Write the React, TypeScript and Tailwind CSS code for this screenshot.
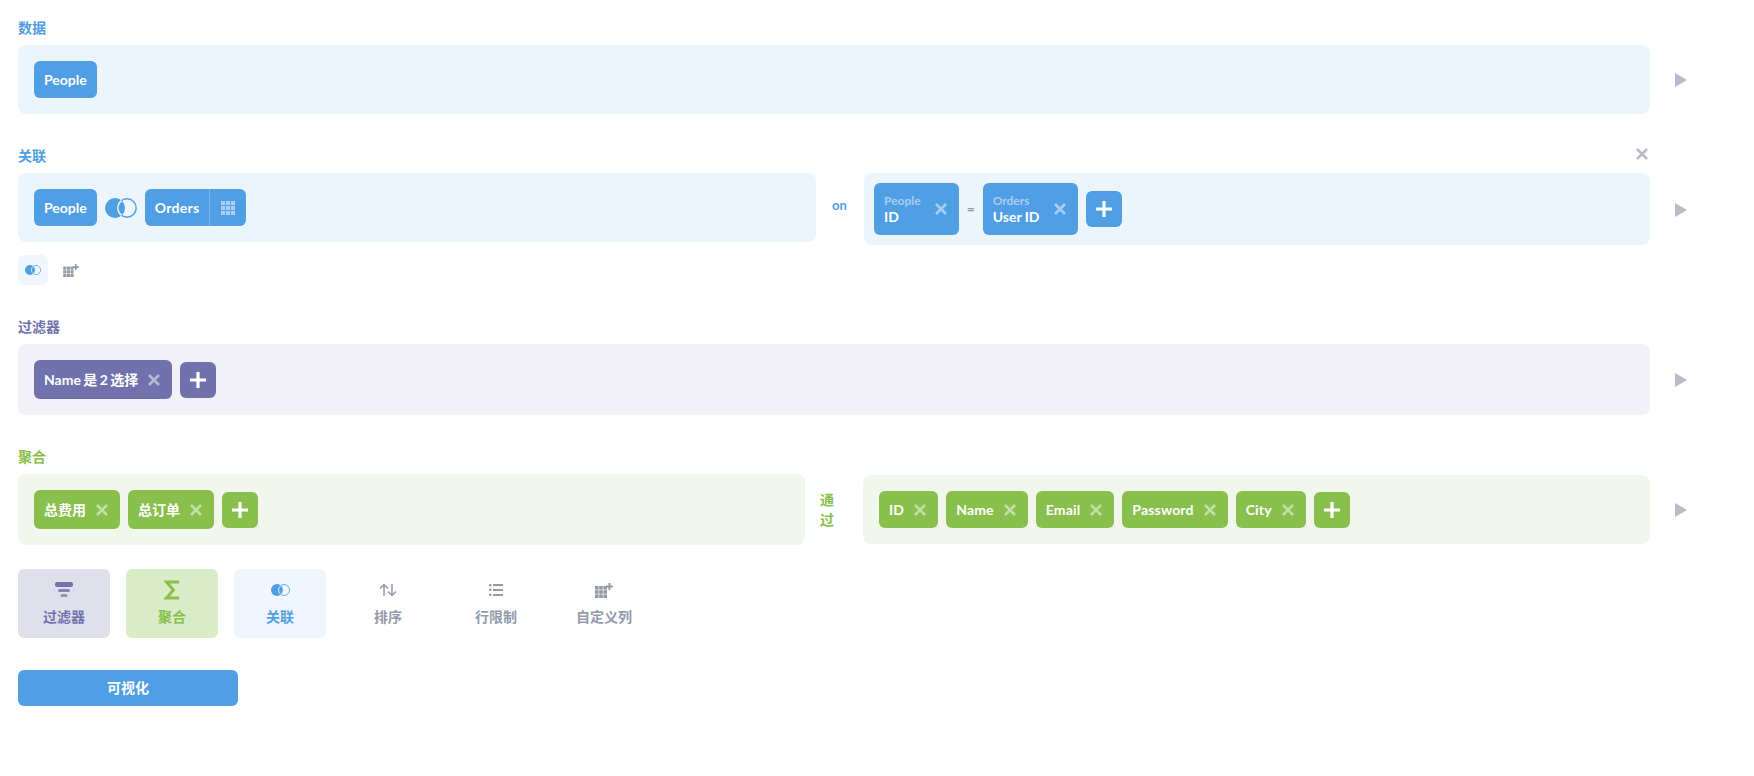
import type { ReactNode } from "react";

const BLUE = "#509EE3";
const PURPLE = "#7172AD";
const GREEN = "#88BF4D";

function CloseIcon({ className = "" }: { className?: string }) {
  return (
    <svg viewBox="0 0 12 12" className={`h-3 w-3 shrink-0 ${className}`} fill="none" stroke="currentColor" strokeWidth="2.6">
      <path d="M1 1l10 10M11 1L1 11" />
    </svg>
  );
}

function PlusIcon() {
  return (
    <svg viewBox="0 0 18 18" className="h-[18px] w-[18px]" fill="none" stroke="currentColor" strokeWidth="3.2">
      <path d="M9 1v16M1 9h16" />
    </svg>
  );
}

function JoinIcon({ className = "", color = BLUE, id }: { className?: string; color?: string; id: string }) {
  return (
    <svg viewBox="0 0 32 20" className={className}>
      <defs>
        <clipPath id={id}>
          <circle cx="10" cy="10" r="10" />
        </clipPath>
      </defs>
      <circle cx="10" cy="10" r="10" fill={color} />
      <circle cx="22" cy="10" r="9.2" fill="none" stroke={color} strokeWidth="1.4" />
      <circle cx="22" cy="10" r="9.2" fill="none" stroke="#fff" strokeWidth="1.4" clipPath={`url(#${id})`} />
    </svg>
  );
}

function GridIcon({ className = "" }: { className?: string }) {
  const cells = [0, 5, 10];
  return (
    <svg viewBox="0 0 14 14" className={className} fill="currentColor">
      {cells.map((y) => cells.map((x) => <rect key={`${x}-${y}`} x={x} y={y} width="4.2" height="4.2" />))}
    </svg>
  );
}

function GridPlusIcon({ className = "" }: { className?: string }) {
  const cells = [0, 4.2, 8.4];
  return (
    <svg viewBox="0 0 18 15" className={className} fill="currentColor">
      {cells.map((y) => cells.map((x) => <rect key={`${x}-${y}`} x={x} y={y + 3} width="3.6" height="3.6" />))}
      <path d="M13.5 0h2v2.5H18v2h-2.5V7h-2V4.500H11v-2h2.500z" />
    </svg>
  );
}

function Play({ className = "" }: { className?: string }) {
  return (
    <svg viewBox="0 0 12 14" className={`ml-[25px] h-[14px] w-3 shrink-0 self-center text-[#B8BBC8] ${className}`} fill="currentColor">
      <path d="M0 0l12 7-12 7z" />
    </svg>
  );
}

function Pill({ color, close = true, children, className = "" }: { color: string; close?: boolean; children: ReactNode; className?: string }) {
  return (
    <div
      className={`flex items-center rounded-[6px] pl-[10px] text-sm font-bold text-white ${close ? "gap-[10px] pr-3" : "pr-[10px]"} ${className}`}
      style={{ backgroundColor: color }}
    >
      <span>{children}</span>
      {close ? <CloseIcon className="text-white/50" /> : null}
    </div>
  );
}

function PlusButton({ color }: { color: string }) {
  return (
    <div className="flex h-9 w-9 shrink-0 items-center justify-center rounded-[6px] text-white" style={{ backgroundColor: color }}>
      <PlusIcon />
    </div>
  );
}

function FieldPill({ table, field }: { table: string; field: string }) {
  return (
    <div className="flex h-[52px] items-center gap-[14px] rounded-[6px] bg-[#509EE3] pl-[10px] pr-3 font-bold text-white">
      <div>
        <div className="text-xs leading-4 text-white/50">{table}</div>
        <div className="text-sm leading-4">{field}</div>
      </div>
      <CloseIcon className="text-white/50" />
    </div>
  );
}

function Label({ color, children }: { color: string; children: ReactNode }) {
  return (
    <div className="mb-2 h-[18px] text-sm font-bold leading-[18px]" style={{ color }}>
      {children}
    </div>
  );
}

function Tile({ label, icon, className }: { label: string; icon: ReactNode; className: string }) {
  return (
    <div className={`flex h-[69px] w-[92px] flex-col items-center rounded-[6px] pt-[11px] ${className}`}>
      <div className="flex h-5 items-center justify-center">{icon}</div>
      <div className="mt-[7px] text-sm font-bold leading-5">{label}</div>
    </div>
  );
}

export default function App() {
  return (
    <div className="min-h-[776px] bg-white pl-[18px] pt-[19px] font-['Lato','Noto_Sans_CJK_SC',sans-serif]">
      <section>
        <Label color={BLUE}>数据</Label>
        <div className="flex">
          <div className="w-[1632px] rounded-lg bg-[#ECF4FC] p-4">
            <Pill color={BLUE} close={false} className="h-[37px] w-fit">People</Pill>
          </div>
          <Play />
        </div>
      </section>

      <section className="mt-[33px]">
        <div className="flex w-[1632px] items-start justify-between">
          <Label color={BLUE}>关联</Label>
          <CloseIcon className="mr-[2px] mt-[1px] text-[#B8BBC8]" />
        </div>
        <div className="flex">
          <div className="flex w-[1632px] items-start">
            <div className="flex h-[69px] w-[798px] items-center gap-2 rounded-lg bg-[#ECF4FC] px-4">
              <Pill color={BLUE} close={false} className="h-[37px]">People</Pill>
              <JoinIcon id="join-main" className="h-5 w-8" />
              <div className="flex h-[37px] items-center rounded-[6px] bg-[#509EE3] text-sm font-bold text-white">
                <span className="flex h-full items-center border-r border-white/25 px-[10px] tracking-[0.02em]">Orders</span>
                <GridIcon className="mx-[11px] h-[14px] w-[14px] text-white/50" />
              </div>
            </div>
            <div className="mx-4 mt-6 w-4 text-[13px] font-bold leading-4 text-[#509EE3]">on</div>
            <div className="flex h-[72px] flex-1 items-center rounded-lg bg-[#ECF4FC] px-[10px]">
              <FieldPill table="People" field="ID" />
              <span className="mx-2 w-2 text-center text-sm font-bold text-[#949AAB]">=</span>
              <FieldPill table="Orders" field="User ID" />
              <div className="ml-2">
                <PlusButton color={BLUE} />
              </div>
            </div>
          </div>
          <Play className="mt-[2px]" />
        </div>
        <div className="mt-[10px] flex">
          <div className="flex h-[30px] w-[30px] items-center justify-center rounded-[6px] bg-[#F0F6FD]">
            <JoinIcon id="join-small" className="h-[10px] w-4" />
          </div>
          <div className="flex h-[30px] w-[46px] items-center justify-center text-[#929AA5]">
            <GridPlusIcon className="h-[13px] w-4" />
          </div>
        </div>
      </section>

      <section className="mt-[33px]">
        <Label color={PURPLE}>过滤器</Label>
        <div className="flex">
          <div className="flex w-[1632px] items-center gap-2 rounded-lg bg-[#F1F1F7] p-4">
            <Pill color={PURPLE} className="h-[39px] [word-spacing:-1px]">Name 是 2 选择</Pill>
            <PlusButton color={PURPLE} />
          </div>
          <Play />
        </div>
      </section>

      <section className="mt-[33px]">
        <Label color={GREEN}>聚合</Label>
        <div className="flex">
          <div className="flex w-[1632px] items-center">
            <div className="flex w-[787px] items-center gap-2 rounded-lg bg-[#F1F7EC] p-4">
              <Pill color={GREEN} className="h-[39px]">总费用</Pill>
              <Pill color={GREEN} className="h-[39px]">总订单</Pill>
              <PlusButton color={GREEN} />
            </div>
            <div className="ml-[15px] mr-[29px] w-[14px] text-sm font-bold leading-5 text-[#88BF4D]">通过</div>
            <div className="flex flex-1 items-center gap-2 rounded-lg bg-[#F1F7EC] p-4">
              {["ID", "Name", "Email", "Password", "City"].map((name) => (
                <Pill key={name} color={GREEN} className="h-[37px] tracking-[0.012em]">{name}</Pill>
              ))}
              <PlusButton color={GREEN} />
            </div>
          </div>
          <Play />
        </div>
      </section>

      <div className="mt-6 flex gap-4">
        <Tile
          label="过滤器"
          className="bg-[#E0E0EC] text-[#7172AD]"
          icon={
            <svg viewBox="0 0 18 16" className="h-4 w-[18px]" fill="currentColor">
              <rect x="0" y="0" width="18" height="5" rx="2" />
              <rect x="3" y="7" width="12" height="3" rx="1.5" opacity="0.85" />
              <rect x="5.5" y="12" width="7" height="3" rx="1.5" opacity="0.7" />
            </svg>
          }
        />
        <Tile
          label="聚合"
          className="bg-[#DAEBC7] text-[#88BF4D]"
          icon={
            <svg viewBox="0 0 16 20" className="h-5 w-4" fill="none" stroke="currentColor" strokeWidth="3">
              <path d="M15 2H2.500l7 8-7 8H15" />
            </svg>
          }
        />
        <Tile label="关联" className="bg-[#F0F6FD] text-[#509EE3]" icon={<JoinIcon id="join-tile" className="h-3 w-[19px]" />} />
        <Tile
          label="排序"
          className="text-[#949AAB]"
          icon={
            <svg viewBox="0 0 18 14" className="h-[14px] w-[18px]" fill="none" stroke="currentColor" strokeWidth="1.5">
              <path d="M5 13V1.500M1 5.500l4-4 4 4M13 1v11.500M9 8.500l4 4 4-4" />
            </svg>
          }
        />
        <Tile
          label="行限制"
          className="text-[#949AAB]"
          icon={
            <svg viewBox="0 0 14 12" className="h-3 w-[14px]" fill="currentColor">
              <rect x="0" y="0" width="2.5" height="2.5" rx="1" />
              <rect x="4" y="0" width="10" height="2" />
              <rect x="0" y="4.5" width="2.5" height="2.5" rx="1" />
              <rect x="4" y="5" width="10" height="2" />
              <rect x="0" y="9.5" width="2.5" height="2.5" rx="1" />
              <rect x="4" y="10" width="10" height="2" />
            </svg>
          }
        />
        <Tile label="自定义列" className="text-[#949AAB]" icon={<GridPlusIcon className="h-[15px] w-[18px]" />} />
      </div>

      <div className="mt-[32px] flex h-[36px] w-[220px] items-center justify-center rounded-[6px] bg-[#509EE3] text-sm font-bold text-white">
        可视化
      </div>
    </div>
  );
}
